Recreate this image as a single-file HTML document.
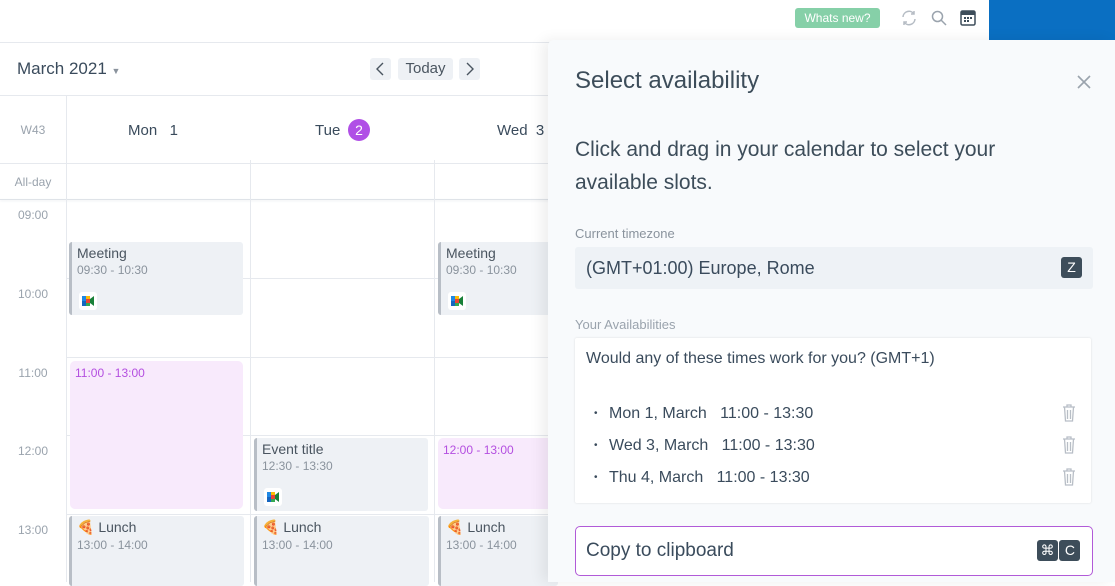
<!DOCTYPE html>
<html><head><meta charset="utf-8"><style>
*{margin:0;padding:0;box-sizing:border-box}
body{width:1115px;height:582px;overflow:hidden;background:#fff;font-family:"Liberation Sans",sans-serif;position:relative;color:#3a4b5c}
.a{position:absolute}
.hl{position:absolute;height:1px;background:#e6e9ee}
.vl{position:absolute;width:1px;background:#e6e9ee}
.t{position:absolute;font-size:12px;color:#9aa3ad;width:66px;text-align:center}
.ev{position:absolute;background:#eef1f5;border-left:3px solid #b8bec6;border-radius:3px;padding:3px 5px}
.ev b{display:block;font-weight:normal;font-size:14px;color:#4a5560}
.ev s{display:block;text-decoration:none;font-size:12px;color:#8a939d;margin-top:2px}
.pk{position:absolute;background:#f8eafc;border-radius:5px;padding:5px;font-size:12px;color:#b44fe0}
.gm{position:absolute;left:7px;width:18px;height:18px;background:#fff;border-radius:3px}
.kb{display:inline-block;background:#3d4d5a;color:#fff;border-radius:3px;font-size:14px;width:21px;height:21px;line-height:21px;text-align:center}
.li{position:absolute;left:34px;font-size:16px;color:#3a4b5c}
.li:before{content:"•";position:absolute;left:-15px;font-size:10px;top:3px}
.tr{position:absolute;left:487px}
</style></head><body>
<div class="a" style="left:989px;top:0;width:126px;height:40px;background:#0a6fc2"></div>
<div class="a" style="left:795px;top:8px;width:85px;height:20px;background:#86d0a8;border-radius:3px;color:#fff;font-size:12px;text-align:center;line-height:20px">Whats new?</div>
<svg class="a" style="left:900px;top:9px" width="18" height="18" viewBox="0 0 18 18" fill="none" stroke="#b5bcc4" stroke-width="1.5"><path d="M3 8a6 6 0 0 1 11-3M15 10a6 6 0 0 1-11 3"/><path d="M14 2v3h-3M4 16v-3h3"/></svg>
<svg class="a" style="left:931px;top:10px" width="16" height="16" viewBox="0 0 16 16" fill="none" stroke="#9aa3ad" stroke-width="1.5"><circle cx="6.5" cy="6.5" r="5"/><path d="M10 10l5 5"/></svg>
<svg class="a" style="left:960px;top:10px" width="16" height="16" viewBox="0 0 16 16"><rect x="1" y="1" width="14" height="14" rx="1.5" fill="none" stroke="#3d4d5a" stroke-width="1.5"/><rect x="1" y="1" width="14" height="4" fill="#3d4d5a"/><g fill="#3d4d5a"><rect x="4" y="7" width="2" height="2"/><rect x="7" y="7" width="2" height="2"/><rect x="10" y="7" width="2" height="2"/><rect x="4" y="10" width="2" height="2"/><rect x="7" y="10" width="2" height="2"/></g></svg>
<div class="hl" style="left:0;top:42px;width:560px"></div>
<div class="a" style="left:17px;top:59px;font-size:17px;color:#3a4b5c">March 2021 <span style="font-size:9px;color:#8a939d">▼</span></div>
<svg width="0" height="0" style="position:absolute"><defs><symbol id="gm" viewBox="0 0 12 10"><rect x="0" y="0" width="4" height="5" fill="#1e88e5"/><rect x="0" y="5" width="4" height="5" fill="#1565c0"/><rect x="4" y="0" width="4" height="3" fill="#fbbc04"/><rect x="4" y="7" width="4" height="3" fill="#34a853"/><rect x="4" y="3" width="4" height="4" fill="#ea4335"/><path d="M8 3l4-3v10l-4-3z" fill="#188038"/></symbol></defs></svg>
<div class="a" style="left:370px;top:58px;width:21px;height:22px;background:#eef1f5;border-radius:3px"><svg width="21" height="22" viewBox="0 0 21 22" fill="none" stroke="#4a5560" stroke-width="1.4"><path d="M13 5l-6 6 6 6"/></svg></div>
<div class="a" style="left:398px;top:58px;width:55px;height:22px;background:#eef1f5;border-radius:3px;text-align:center;line-height:22px;color:#4a5560;font-size:15px">Today</div>
<div class="a" style="left:459px;top:58px;width:21px;height:22px;background:#eef1f5;border-radius:3px"><svg width="21" height="22" viewBox="0 0 21 22" fill="none" stroke="#4a5560" stroke-width="1.4"><path d="M8 5l6 6-6 6"/></svg></div>
<div class="hl" style="left:0;top:95px;width:560px"></div>
<div class="hl" style="left:0;top:163px;width:560px"></div>
<div class="hl" style="left:0;top:199px;width:560px;background:#dfe3e8;box-shadow:0 1px 2px #e6e9ee"></div>
<div class="hl" style="left:66px;top:278px;width:494px"></div>
<div class="hl" style="left:66px;top:357px;width:494px"></div>
<div class="hl" style="left:66px;top:435px;width:494px"></div>
<div class="hl" style="left:66px;top:514px;width:494px"></div>
<div class="vl" style="left:66px;top:95px;height:487px"></div>
<div class="vl" style="left:250px;top:160px;height:422px"></div>
<div class="vl" style="left:434px;top:160px;height:422px"></div>
<div class="t" style="top:123px">W43</div>
<div class="t" style="top:175px">All-day</div>
<div class="t" style="top:208px">09:00</div>
<div class="t" style="top:287px">10:00</div>
<div class="t" style="top:366px">11:00</div>
<div class="t" style="top:444px">12:00</div>
<div class="t" style="top:523px">13:00</div>
<div class="a" style="left:128px;top:122px;font-size:15px">Mon &nbsp;&nbsp;1</div>
<div class="a" style="left:315px;top:122px;font-size:15px">Tue</div>
<div class="a" style="left:348px;top:119px;width:22px;height:22px;border-radius:50%;background:#b04fe6;color:#fff;text-align:center;line-height:22px;font-size:14px">2</div>
<div class="a" style="left:497px;top:122px;font-size:15px">Wed &nbsp;3</div>
<div class="ev" style="left:69px;top:242px;width:174px;height:73px"><b>Meeting</b><s>09:30 - 10:30</s><div class="gm" style="top:50px"><svg style="margin:4px 3px" width="12" height="10"><use href="#gm"/></svg></div></div>
<div class="ev" style="left:438px;top:242px;width:120px;height:73px"><b>Meeting</b><s>09:30 - 10:30</s><div class="gm" style="top:50px"><svg style="margin:4px 3px" width="12" height="10"><use href="#gm"/></svg></div></div>
<div class="pk" style="left:70px;top:361px;width:173px;height:148px">11:00 - 13:00</div>
<div class="ev" style="left:254px;top:438px;width:174px;height:73px"><b>Event title</b><s>12:30 - 13:30</s><div class="gm" style="top:50px"><svg style="margin:4px 3px" width="12" height="10"><use href="#gm"/></svg></div></div>
<div class="pk" style="left:438px;top:438px;width:120px;height:71px">12:00 - 13:00</div>
<div class="ev" style="left:69px;top:516px;width:175px;height:70px"><b>🍕 Lunch</b><s>13:00 - 14:00</s></div>
<div class="ev" style="left:254px;top:516px;width:175px;height:70px"><b>🍕 Lunch</b><s>13:00 - 14:00</s></div>
<div class="ev" style="left:438px;top:516px;width:120px;height:70px"><b>🍕 Lunch</b><s>13:00 - 14:00</s></div>

<div class="a" style="left:548px;top:40px;width:567px;height:542px;background:#f8fafc;border-radius:6px 0 0 0;box-shadow:-6px 0 14px rgba(0,0,0,.07)">
<div class="a" style="left:27px;top:27px;font-size:24px;color:#3d4d5a">Select availability</div>
<svg class="a" style="left:529px;top:35px" width="14" height="14" viewBox="0 0 14 14" stroke="#9aa3ad" stroke-width="1.6"><path d="M1 1l12 12M13 1L1 13"/></svg>
<div class="a" style="left:27px;top:93px;font-size:21px;line-height:33px;color:#3d4d5a;width:480px">Click and drag in your calendar to select your available slots.</div>
<div class="a" style="left:27px;top:186px;font-size:13px;color:#8a939d">Current timezone</div>
<div class="a" style="left:27px;top:207px;width:518px;height:42px;background:#eef2f6;border-radius:3px"><div class="a" style="left:11px;top:11px;font-size:18px;color:#3a4b5c">(GMT+01:00) Europe, Rome</div><div class="a" style="left:486px;top:10px"><span class="kb">Z</span></div></div>
<div class="a" style="left:27px;top:277px;font-size:13px;color:#9aa3ad">Your Availabilities</div>
<div class="a" style="left:27px;top:298px;width:516px;height:165px;background:#fff;box-shadow:0 0 2px rgba(0,0,0,.12);border-radius:2px">
<div class="a" style="left:11px;top:12px;font-size:16px;color:#3a4b5c">Would any of these times work for you? (GMT+1)</div>
<div class="li" style="top:67px">Mon 1, March &nbsp;&nbsp;11:00 - 13:30</div>
<div class="li" style="top:99px">Wed 3, March &nbsp;&nbsp;11:00 - 13:30</div>
<div class="li" style="top:131px">Thu 4, March &nbsp;&nbsp;11:00 - 13:30</div>
<svg class="tr" style="top:66px" width="14" height="18" viewBox="0 0 14 18" fill="none" stroke="#b8bec6" stroke-width="1.3"><path d="M1 3h12M5 3V1h4v2M2.5 3l1 14h7l1-14M5.5 6v9M8.5 6v9"/></svg>
<svg class="tr" style="top:98px" width="14" height="18" viewBox="0 0 14 18" fill="none" stroke="#b8bec6" stroke-width="1.3"><path d="M1 3h12M5 3V1h4v2M2.5 3l1 14h7l1-14M5.5 6v9M8.5 6v9"/></svg>
<svg class="tr" style="top:130px" width="14" height="18" viewBox="0 0 14 18" fill="none" stroke="#b8bec6" stroke-width="1.3"><path d="M1 3h12M5 3V1h4v2M2.5 3l1 14h7l1-14M5.5 6v9M8.5 6v9"/></svg>
</div>
<div class="a" style="left:27px;top:486px;width:518px;height:50px;border:1.5px solid #b15ad8;border-radius:5px;background:#fff"><div class="a" style="left:10px;top:13px;font-size:19px;color:#3a4b5c">Copy to clipboard</div><div class="a" style="left:461px;top:13px"><span class="kb">⌘</span> <span class="kb" style="margin-left:-3px">C</span></div></div>
</div>
</body></html>
